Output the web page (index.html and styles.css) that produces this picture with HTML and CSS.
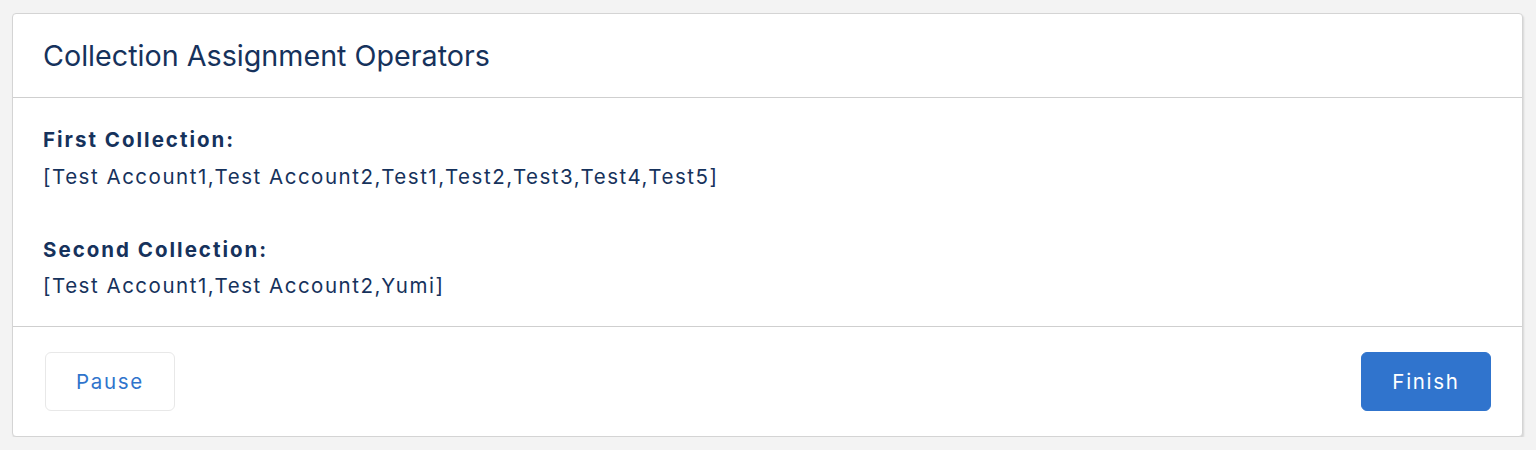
FILE: index.html
```html
<!DOCTYPE html>
<html lang="en">
<head>
<meta charset="utf-8">
<title>Collection Assignment Operators</title>
<link rel="stylesheet" href="styles.css">
</head>
<body>
<div class="card">
  <div class="card-header">
    <h1 class="title">Collection Assignment Operators</h1>
  </div>
  <div class="card-body">
    <p class="label">First Collection:</p>
    <p class="value">[Test Account1,Test Account2,Test1,Test2,Test3,Test4,Test5]</p>
    <p class="spacer">&nbsp;</p>
    <p class="label">Second Collection:</p>
    <p class="value">[Test Account1,Test Account2,Yumi]</p>
  </div>
  <div class="card-footer">
    <button class="btn btn-neutral" type="button">Pause</button>
    <button class="btn btn-brand" type="button">Finish</button>
  </div>
</div>
</body>
</html>
```

FILE: styles.css
```css
* { box-sizing: border-box; }
html, body {
  margin: 0;
  padding: 0;
  background: #f3f3f3;
  font-family: Inter, "Noto Sans", Roboto, sans-serif;
  color: #16325c;
}
body {
  padding: 13px 13px 0 12px;
}
.card {
  background: #ffffff;
  border: 1px solid #d4d4d4;
  border-radius: 4px;
  box-shadow: 1px 2px 2px rgba(0, 0, 0, 0.12);
  height: 424px;
  display: flex;
  flex-direction: column;
}
.card-header {
  height: 84px;
  display: flex;
  align-items: center;
  padding: 0 30px;
  border-bottom: 1px solid #cfcfcf;
}
.title {
  margin: 0;
  font-size: 28.7px;
  font-weight: 400;
  letter-spacing: 0;
  color: #16325c;
}
.card-body {
  height: 229px;
  padding: 24px 30px 0;
  border-bottom: 1px solid #cfcfcf;
  font-size: 20.5px;
  line-height: 36.6px;
  letter-spacing: 1.52px;
}
.card-body p {
  margin: 0;
}
.label {
  font-weight: 700;
  letter-spacing: 2px;
}
.card-footer {
  flex: 1;
  display: flex;
  justify-content: space-between;
  align-items: center;
  padding: 0 31px 0 32px;
}
.btn {
  font-family: Inter, "Noto Sans", Roboto, sans-serif;
  font-size: 20.5px;
  letter-spacing: 1.7px;
  height: 59px;
  width: 130px;
  border-radius: 6px;
  cursor: pointer;
}
.btn-neutral {
  background: #ffffff;
  border: 1px solid #e8e8e8;
  color: #2f74cc;
}
.btn-brand {
  background: #3074cd;
  border: 1px solid #3074cd;
  color: #ffffff;
}
```
